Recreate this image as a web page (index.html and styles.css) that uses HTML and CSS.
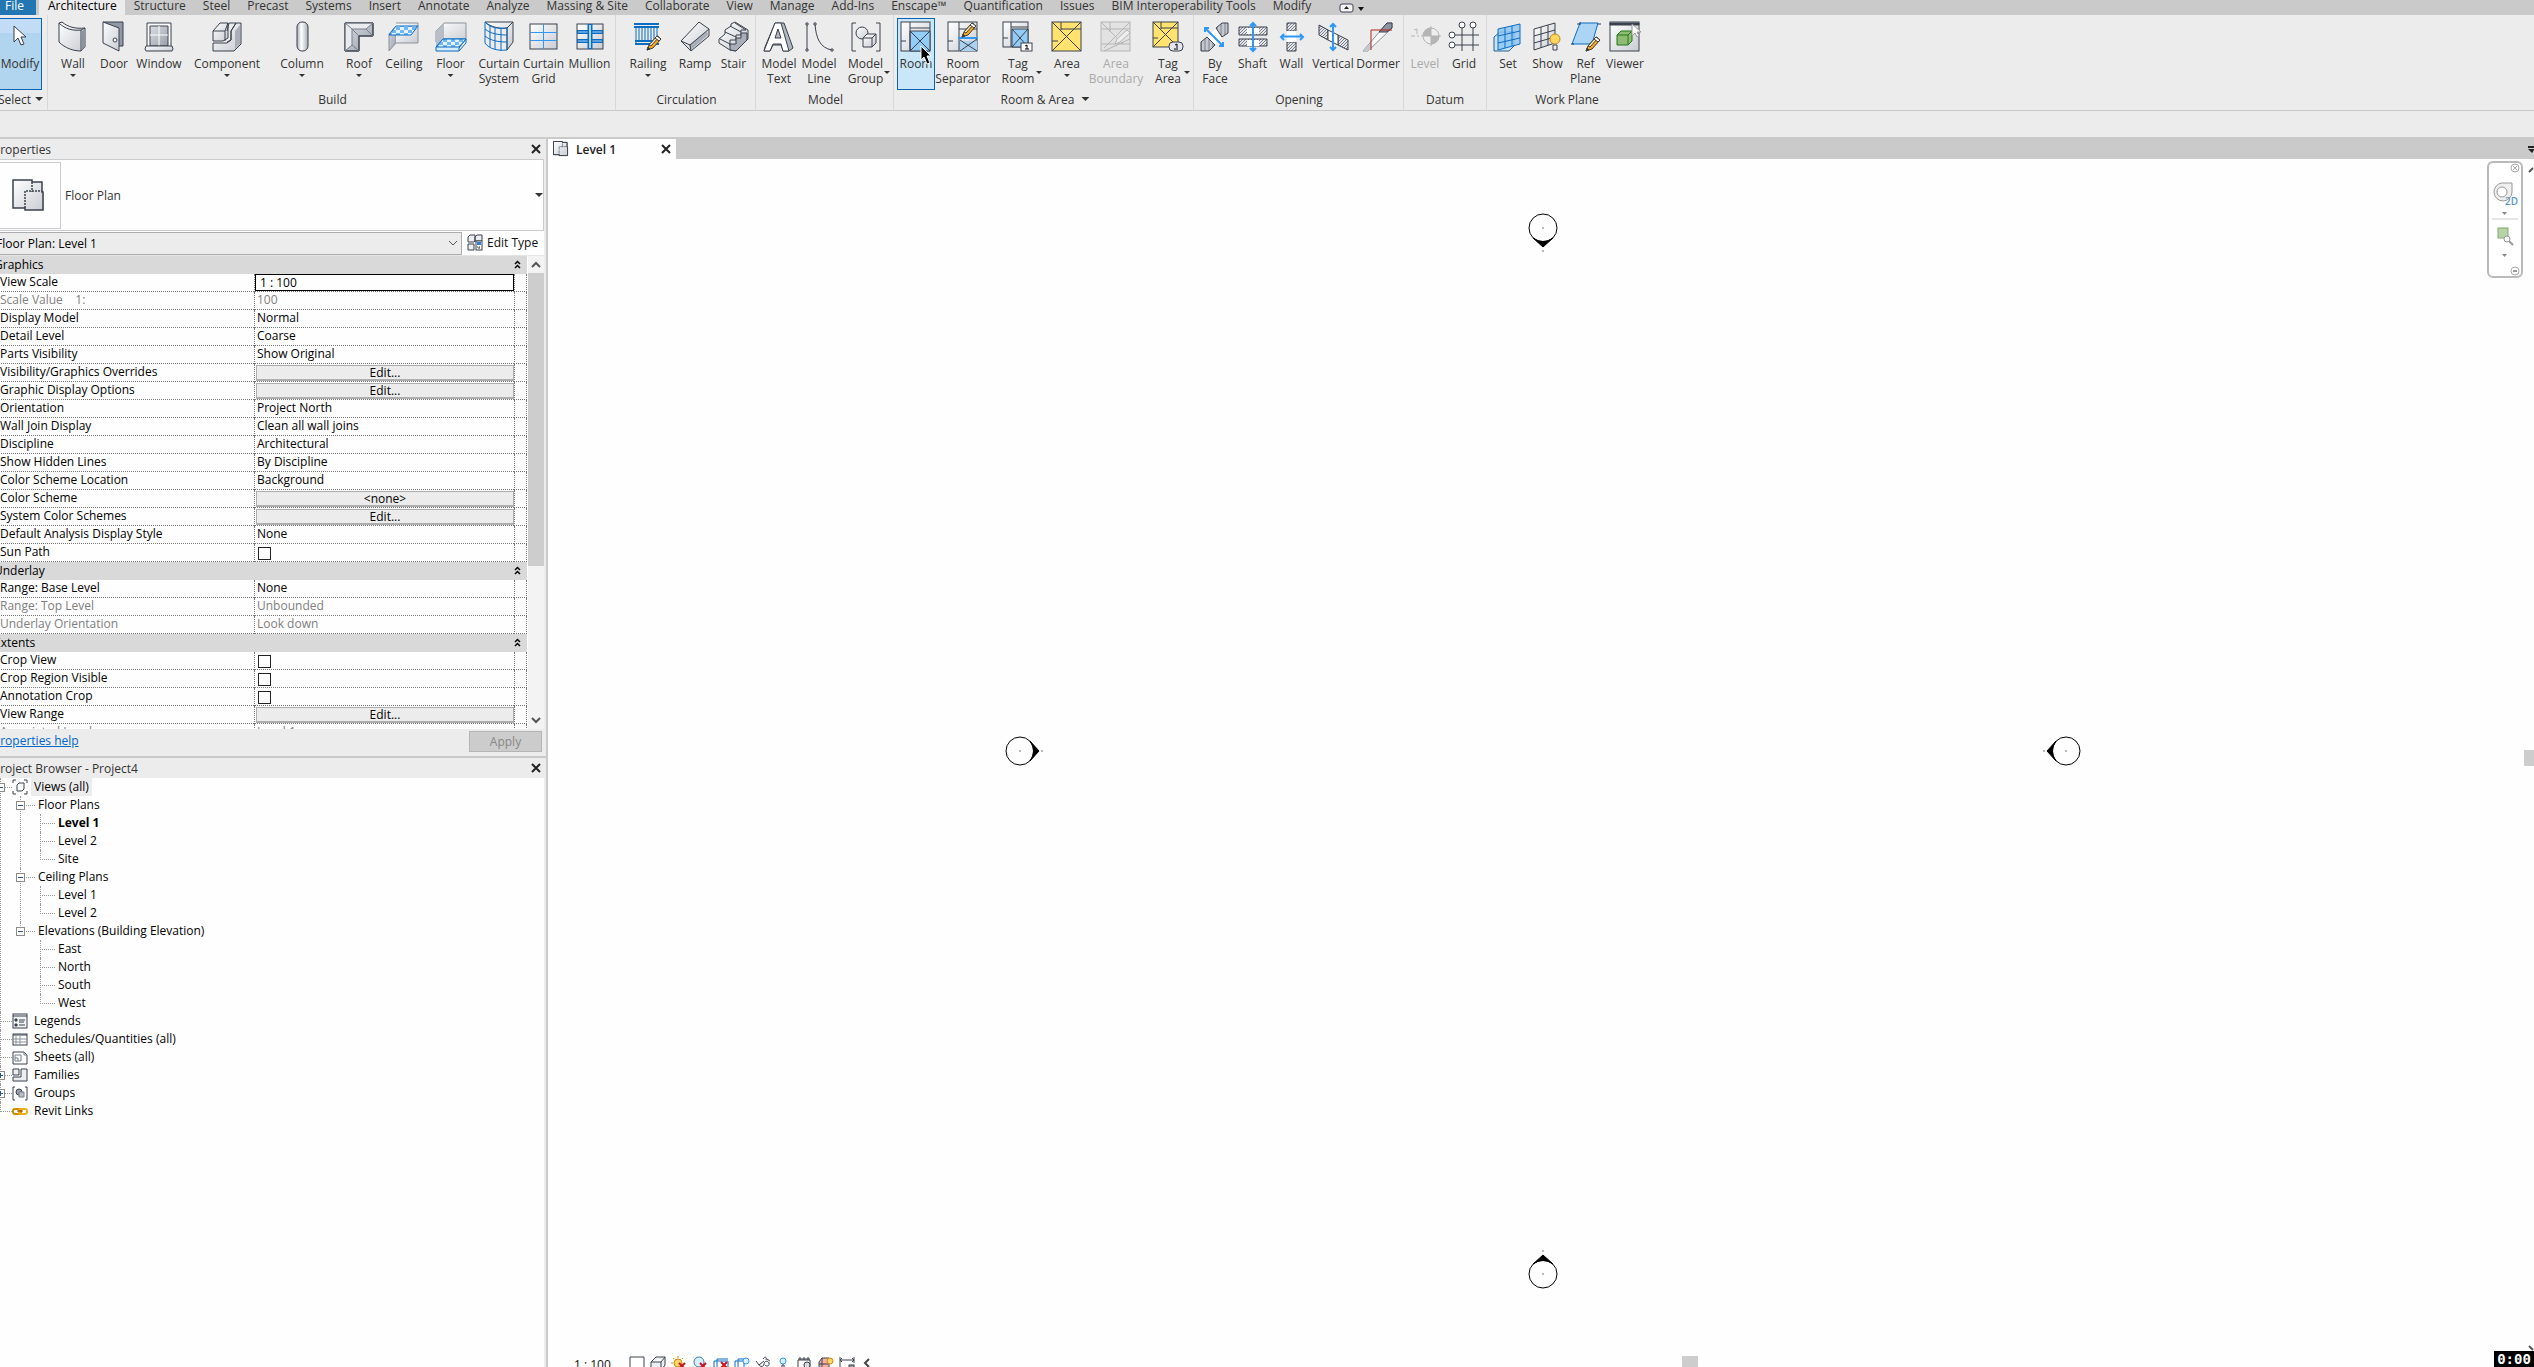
FILE: index.html
```html
<!DOCTYPE html>
<html lang="en">
<head>
<meta charset="utf-8">
<title>Project4 - Floor Plan: Level 1</title>
<link rel="stylesheet" href="styles.css">
</head>
<body>
<svg class="defs" aria-hidden="true">
  <defs>
    <linearGradient id="g" x1="0" y1="0" x2="1" y2="1"><stop offset="0" stop-color="#fff"/><stop offset="1" stop-color="#c9ccd3"/></linearGradient>
    <linearGradient id="gd" x1="0" y1="0" x2="1" y2="1"><stop offset="0" stop-color="#dcdfe4"/><stop offset="1" stop-color="#979da9"/></linearGradient>
    <linearGradient id="gc" x1="0" y1="0" x2="1" y2="0"><stop offset="0" stop-color="#a9adb6"/><stop offset=".4" stop-color="#fff"/><stop offset="1" stop-color="#a9adb6"/></linearGradient>
    <pattern id="hatch" width="3" height="3" patternUnits="userSpaceOnUse"><rect width="3" height="3" fill="#e4e6ea"/><path d="M0 3L3 0" stroke="#7b818c" stroke-width="1"/></pattern>
    <pattern id="bars" width="4" height="4" patternUnits="userSpaceOnUse"><rect width="4" height="4" fill="#c5c8cf"/><path d="M2 0v4" stroke="#7b818c" stroke-width="1"/></pattern>
    <pattern id="check" width="8" height="6" patternUnits="userSpaceOnUse"><rect width="8" height="6" fill="#e3f2fd"/><path d="M0 0h4v3h-4zM4 3h4v3h-4z" fill="#6db8f5"/></pattern>
    <symbol id="pencil" viewBox="0 0 16 16"><path d="M1 15l2-5 8-9 4 3-8 9z" fill="#f6a821" stroke="#4a3a2a"/><path d="M3 10l8-9 2 1-8 9z" fill="#ffe9a8"/><path d="M11 1l4 3-2 2-4-3z" fill="#fff" stroke="#4a3a2a"/><path d="M1 15l1-3 2 2z" fill="#333"/></symbol>
    <symbol id="close" viewBox="0 0 10 10"><path d="M1 1l8 8M9 1l-8 8" stroke="#222" stroke-width="2" fill="none"/></symbol>
    <symbol id="up2" viewBox="0 0 7 9"><path d="M1 4l2.500-2.500L6 4M1 8l2.500-2.500L6 8" stroke="#000" stroke-width="1.500" fill="none"/></symbol>
    <symbol id="plan" viewBox="0 0 32 32"><path d="M1 1h19v2h10v10h2v18h-19v-2h-12z" fill="url(#g)"/><path d="M20 3v-2h-19v28h12v2h18v-18h-1v-10h-10" fill="none" stroke="#3a414c" stroke-width="1.500"/><path d="M20 3v10M13 29v-17h17" fill="none" stroke="#3a414c" stroke-width="1.500" stroke-dasharray="2 1"/></symbol>
  </defs>
</svg>

<div class="app">
<nav class="tabs" aria-label="Ribbon tabs">
  <button class="file">File</button>
  <button class="tab active">Architecture</button>
  <button class="tab">Structure</button>
  <button class="tab">Steel</button>
  <button class="tab">Precast</button>
  <button class="tab">Systems</button>
  <button class="tab">Insert</button>
  <button class="tab">Annotate</button>
  <button class="tab">Analyze</button>
  <button class="tab">Massing &amp; Site</button>
  <button class="tab">Collaborate</button>
  <button class="tab">View</button>
  <button class="tab">Manage</button>
  <button class="tab">Add-Ins</button>
  <button class="tab">Enscape™</button>
  <button class="tab">Quantification</button>
  <button class="tab">Issues</button>
  <button class="tab">BIM Interoperability Tools</button>
  <button class="tab">Modify</button>
  <button class="fold" aria-label="Minimize ribbon"><svg width="26" height="10"><rect x="1" y="1" width="13" height="8" rx="2" fill="#f4f4f4" stroke="#3a414c"/><path d="M5 6l2.500-3L10 6z" fill="#222"/><path d="M19 4h6l-3 4z" fill="#111"/></svg></button>
</nav>

<header class="ribbon">
  <section class="panel select">
    <div class="tools">
      <button class="tool picked"><svg class="ic"><path d="M10 5v16l4-4 3 7 3-1-3-7h5z" fill="#fff"/></svg><span>Modify</span></button>
    </div>
    <h2>Select <i class="caret big"></i></h2>
  </section>

  <section class="panel build">
    <div class="tools">
      <button class="tool"><svg class="ic"><path d="M2 2l3-1c6 5 13 7 23 6v19l-4 4c-8 0-16-3-22-9z" fill="url(#g)"/><path d="M2 2c6 6 14 8 22 7v21M24 9l4-2"/><path d="M25 10l3-2v18l-3 3z" fill="#8d93a0" stroke="none"/></svg><span>Wall</span><i class="caret"></i></button>
      <button class="tool"><svg class="ic"><path d="M5 1h20v24h-4" fill="#9299a6"/><path d="M5 1l16 6v23l-16-8z" fill="url(#g)"/><circle cx="17" cy="19" r="2" fill="#fff"/></svg><span>Door</span></button>
      <button class="tool"><svg class="ic"><path d="M4 2h24v24h-24z" fill="#fff"/><path d="M7 5h18v20h-18z" fill="url(#gd)"/><path d="M16 5v20M7 14h18" stroke="#fff"/><path d="M3 25h26l1 3-1 2h-26l-1-2z" fill="url(#g)"/></svg><span>Window</span></button>
      <button class="tool"><svg class="ic"><path d="M2 10l7-8h8v15l-5 3h-10z" fill="url(#g)"/><path d="M20 10l5-8h5v21l-7 7h-21v-8h14l4-3z" fill="url(#g)"/><path d="M2 10h12l3-8M14 10v10M16 21l4-2v-9l5-8h-7l-2 8" /><path d="M24 10l5-6v19l-5 5z" fill="#a9aeb9" stroke="none"/></svg><span>Component</span><i class="caret"></i></button>
      <button class="tool"><svg class="ic"><rect x="11" y="1" width="11" height="29" rx="5" fill="url(#gc)"/></svg><span>Column</span><i class="caret"></i></button>
      <button class="tool"><svg class="ic"><path d="M2 2h28v13h-14v15h-14z" fill="url(#gd)"/><path d="M2 2h28l-7 6h-14v16l-7 6z" fill="#e9ebef" stroke="none"/><path d="M2 2h28v13h-14v15h-14z"/><path d="M2 2l7 6h14l7 7M9 8v16l7 6M9 8l7 7M23 8l7-6M9 24l-7 6" stroke="#777e8a"/></svg><span>Roof</span><i class="caret"></i></button>
      <button class="tool"><svg class="ic"><path d="M1 13v17l7-8v-17z" fill="url(#gd)" stroke="#8c919b"/><path d="M8 2h22v20h-22" stroke="#8c919b" fill="url(#g)"/><path d="M8 5h22l-7 9h-22z" fill="url(#check)" stroke="#0b6cc4"/></svg><span>Ceiling</span></button>
      <button class="tool"><svg class="ic"><path d="M1 21v-11l8-8h22v17" fill="url(#g)" stroke="#8c919b"/><path d="M1 10l8-8v17l-8 7z" fill="#b9bdc6" stroke="none"/><path d="M1 26l7-8h23l-7 9v3h-23z" fill="#d7ecfd" stroke="#0b6cc4"/><path d="M1 26l7-8h23l-7 8z" fill="url(#check)" stroke="#0b6cc4"/><path d="M24 30l7-8v-4" stroke="#0b6cc4"/></svg><span>Floor</span><i class="caret"></i></button>
      <button class="tool"><svg class="ic"><path d="M2 1h28v20l-6 8v-22c-8 1-16-1-22-6" fill="url(#g)"/><path d="M24 7l6-6"/><path d="M2 1c5 6 14 7 22 6v22c-9 1-18-1-22-7zM7 4v22M12 6v22M18 7v23M2 8c6 5 14 6 22 6M2 15c6 5 14 6 22 6" stroke="#0b6cc4"/></svg><span>Curtain<br>System</span></button>
      <button class="tool"><svg class="ic"><rect x="2" y="3" width="27" height="25" fill="url(#g)"/><path d="M15.500 3v25M2 11.500h27M2 19.500h27" stroke="#2f97f5"/></svg><span>Curtain<br>Grid</span></button>
      <button class="tool"><svg class="ic"><rect x="3" y="3" width="26" height="25" fill="url(#g)"/><path d="M3 11h26M3 20h26" stroke="#0b6cc4" stroke-width="4"/><path d="M4 11h24M4 20h24" stroke="#a8d6f9"/><path d="M16 3v25" stroke="#0b6cc4" stroke-width="5"/><path d="M16 4v23" stroke="#a8d6f9" stroke-width="2"/></svg><span>Mullion</span></button>
    </div>
    <h2>Build</h2>
  </section>

  <section class="panel circulation">
    <div class="tools">
      <button class="tool"><svg class="ic"><path d="M2 3h25M2 6h25M3 20h24M3 23h24" stroke="#0b6cc4" stroke-width="2"/><path d="M4 6v17M7 6v14M10 6v14M13 6v14M16 6v14M19 6v14M22 6v14M25 6v17" stroke="#0b6cc4"/><use href="#pencil" x="14" y="14" width="16" height="16"/></svg><span>Railing</span><i class="caret"></i></button>
      <button class="tool"><svg class="ic"><path d="M2 20l18-19 10 7v7l-18 15z" fill="url(#g)"/><path d="M12 29l-2-5 18-14 1 4z" fill="#a9aeb9" stroke="none"/><path d="M2 20l9 4 19-16M11 24l1 6"/></svg><span>Ramp</span></button>
      <button class="tool"><svg class="ic"><path d="M1 18l6-5v-4l6-4v-2l4-2 13 8v9l-12 12-6-1-11-7z" fill="url(#g)"/><path d="M17 2l11 7h-5v5h-5v5h-6v6M12 5l11 6M7 11l11 5M2 18l10 5"/><path d="M12 29v-6h6v-6h5v-5h6v7l-11 11z" fill="#a9aeb9" stroke-width="1"/></svg><span>Stair</span></button>
    </div>
    <h2>Circulation</h2>
  </section>

  <section class="panel model">
    <div class="tools">
      <button class="tool"><svg class="ic"><path d="M12 2h9l9 25-4 3h-6l-2-6h-8l-3 6h-6l1-4z" fill="#b1b6c0"/><path d="M12 2h6l8 28h-6l-2-7h-8l-3 7h-6z" fill="#fff"/><path d="M15 8l3 9h-6z" fill="#b1b6c0"/></svg><span>Model<br>Text</span></button>
      <button class="tool"><svg class="ic"><path d="M4 3v26M12 3c1 14 5 24 17 26" /><g fill="#fff"><path d="M3 2h2v2h-2zM3 28h2v2h-2zM11 2h2v2h-2zM28 28h2v2h-2z"/></g></svg><span>Model<br>Line</span></button>
      <button class="tool"><svg class="ic"><path d="M6 2h-4v28h4M26 2h4v28h-4"/><circle cx="12" cy="12" r="6" fill="url(#g)"/><path d="M13 17l4-4h9v9l-4 4h-9z" fill="url(#g)"/><path d="M13 17h9v9M22 17l4-4"/></svg><span>Model<br>Group</span><i class="caret side"></i></button>
    </div>
    <h2>Model</h2>
  </section>

  <section class="panel room">
    <div class="tools">
      <button class="tool hover"><svg class="ic"><rect x="1" y="1" width="29" height="29" fill="url(#g)"/><path d="M10 10h20v20h-20z" fill="#92ccf7"/><path d="M10 1v29M10 7h20M10 10l20 20M30 10l-20 20M1 20h5"/></svg><span>Room</span><svg class="pointer" width="12" height="20"><path d="M1 1v14l3-3 3 7 3-1-3-7h4z" fill="#000" stroke="#fff"/></svg></button>
      <button class="tool"><svg class="ic"><rect x="1" y="1" width="29" height="29" fill="url(#g)"/><path d="M12 20h18v10h-18z" fill="#a9d1f0" stroke="none"/><path d="M12 1v29M12 8h18M13 19l17 11M30 18l-17 12M1 20h5"/><path d="M11 17h20" stroke="#2f97f5" stroke-width="2"/><use href="#pencil" x="14" y="1" width="16" height="16"/></svg><span>Room<br>Separator</span></button>
      <button class="tool"><svg class="ic"><rect x="1" y="1" width="25" height="25" fill="url(#g)"/><path d="M10 8h16v18h-16z" fill="#92ccf7"/><path d="M9 1v25M9 6h17M10 8l16 18M26 8l-16 18M1 17h5"/><rect x="19" y="22" width="11" height="8" fill="#fff"/><path d="M23 25l2-1v4M23 28h4" stroke="#000"/></svg><span>Tag<br>Room</span><i class="caret side"></i></button>
      <button class="tool"><svg class="ic"><rect x="1" y="1" width="29" height="29" fill="#ffe36e"/><path d="M10 1v8M10 8h20M1 20h6M1 1l29 29M30 1l-29 29"/></svg><span>Area</span><i class="caret"></i></button>
      <button class="tool" disabled><svg class="ic"><g stroke="#b5b5b5"><rect x="1" y="1" width="29" height="29" fill="#e2e2e2"/><path d="M10 1v10M1 8h29M1 23h29M1 1l22 22M30 1l-26 26M4 30l26-12"/><path d="M15 23l2-5 10-9 3 3-10 9z" fill="#eee"/></g></svg><span>Area<br>Boundary</span></button>
      <button class="tool"><svg class="ic"><rect x="1" y="1" width="25" height="25" fill="#ffe36e"/><path d="M9 1v7M9 7h17M1 17h5M1 1l25 25M26 1l-25 25"/><rect x="17" y="21" width="14" height="9" rx="4" fill="#e3e5f0"/><path d="M23 24l2-1v4M22 28h4" stroke="#000"/></svg><span>Tag<br>Area</span><i class="caret side"></i></button>
    </div>
    <h2>Room &amp; Area <i class="caret big"></i></h2>
  </section>

  <section class="panel opening">
    <div class="tools">
      <button class="tool"><svg class="ic"><path d="M8 17l10-11 6 9-9 9z" fill="#fff" stroke="none"/><path d="M2 30v-9l6-5 8 8-6 6zM17 7l6-5h6v10l-6 4z" fill="url(#bars)"/><path d="M6 7l18 18M6 11v-4h4M20 25h4v-4" stroke="#2f97f5" stroke-width="2"/></svg><span>By<br>Face</span></button>
      <button class="tool"><svg class="ic"><path d="M2 6h28v8h-28zM2 18h28v7h-28z" fill="url(#hatch)" stroke-width="1"/><path d="M10 7h12v6h-12zM10 19h12v6h-12z" fill="#fff" stroke="none"/><path d="M16 2v28M13 5l3-3 3 3M13 27l3 3 3-3" stroke="#2f97f5" stroke-width="2"/></svg><span>Shaft</span></button>
      <button class="tool"><svg class="ic"><path d="M11 2h9v8h-9zM11 21h9v9h-9z" fill="url(#hatch)"/><path d="M11 10h9v11h-9z" fill="#fff" stroke="none"/><path d="M5 15.500h22M8 13l-3 3 3 3M24 13l3 3-3 3" stroke="#2f97f5" stroke-width="2"/></svg><span>Wall</span></button>
      <button class="tool"><svg class="ic"><path d="M2 4l9 5v10l-9-5zM21 14l10 5v10l-10-5z" fill="url(#hatch)"/><path d="M11 9l10 5v10l-10-5z" fill="#fff"/><path d="M16 3v26M13 6l3-3 3 3M13 26l3 3 3-3" stroke="#2f97f5" stroke-width="2"/></svg><span>Vertical</span></button>
      <button class="tool"><svg class="ic"><path d="M1 30l24-28h5v5l-24 23z" fill="#f8f8f8" stroke="#8c919b"/><path d="M17 11l8-9h5v5l-5 4z" fill="#8d93a0"/><path d="M1 30l8-9v7l-3 2z" fill="#c5c8cf" stroke="none"/><path d="M9 29v-20h21" stroke="#b3261a"/></svg><span>Dormer</span></button>
    </div>
    <h2>Opening</h2>
  </section>

  <section class="panel datum">
    <div class="tools">
      <button class="tool" disabled><svg class="ic"><g stroke="#b5b5b5"><path d="M2 15h4M8 15h2M5 9l3-1v5M12 15h20M22 5v20"/><circle cx="22" cy="15" r="8" fill="#eee"/><path d="M22 7a8 8 0 0 0-8 8h8zM22 23a8 8 0 0 0 8-8h-8z" fill="#b5b5b5"/></g></svg><span>Level</span></button>
      <button class="tool"><svg class="ic"><path d="M7 14h24M7 24h24M14 7v23M25 7v23"/><g fill="#fff"><circle cx="4" cy="14" r="3"/><circle cx="4" cy="24" r="3"/><circle cx="14" cy="4" r="3"/><circle cx="25" cy="4" r="3"/></g></svg><span>Grid</span></button>
    </div>
    <h2>Datum</h2>
  </section>

  <section class="panel work">
    <div class="tools">
      <button class="tool"><svg class="ic"><path d="M2 16l6-5h14v14l-5 5h-15z" fill="#c5e3fa" stroke="#2a5e93"/><path d="M6 8l22-5v20l-22 6z" fill="#8cc6f3" fill-opacity=".8" stroke="#0b6cc4"/><path d="M13 7v20M20 5v20M6 15l22-5M6 22l22-5" stroke="#0b6cc4"/></svg><span>Set</span></button>
      <button class="tool"><svg class="ic"><path d="M2 8l21-6v20l-21 7z" fill="url(#g)"/><path d="M9 6v21M16 4v20M2 15l21-6M2 22l21-6"/><circle cx="23" cy="18" r="5" fill="#ffd75e" stroke="#c08a1e"/><path d="M21 24h4v5h-4z" fill="#eee"/></svg><span>Show</span></button>
      <button class="tool"><svg class="ic"><path d="M10 2h18l-6 21h-20z" fill="#acd4f4" stroke="#0b6cc4"/><path d="M7 3h3M10 1v3M28 3h3M1 23h3" stroke="#2a3f66"/><use href="#pencil" x="15" y="15" width="16" height="16"/></svg><span>Ref<br>Plane</span></button>
      <button class="tool"><svg class="ic"><rect x="1" y="1" width="29" height="29" fill="url(#g)"/><path d="M1 2h29v2h-29z" fill="#3a414c"/><path d="M8 14l4-4h11v10l-4 4h-11z" fill="#8fbb74" stroke="#1c7a12"/><path d="M8 14h11v10M19 14l4-4" stroke="#1c7a12"/><path d="M23 3v12l3-3 2 4 2-1-2-4h4z" fill="#fff" stroke="#999"/></svg><span>Viewer</span></button>
    </div>
    <h2>Work Plane</h2>
  </section>
</header>
<div class="options"></div>

<div class="body">
<aside class="dock">
  <section class="properties">
    <div class="title"><h3>Properties</h3><button class="x" aria-label="Close Properties"><svg width="10" height="10"><use href="#close"/></svg></button></div>
    <div class="type">
      <div class="thumb"><svg width="32" height="32"><use href="#plan"/></svg></div>
      <span>Floor Plan</span><i class="caret big"></i>
    </div>
    <div class="instance">
      <div class="combo"><select aria-label="Instance filter"><option>Floor Plan: Level 1</option></select><svg width="10" height="7"><path d="M1 1l4 4 4-4" fill="none" stroke="#555"/></svg></div>
      <button class="edit-type"><svg width="16" height="17"><g fill="#eceef2" stroke="#3a414c"><path d="M1 3l2-2h5v6l-1 1h-6zM8 3l2-2h5v6h-7zM1 10h6v6h-6z"/><rect x="9" y="7" width="6" height="9" fill="#fff"/></g><path d="M10 8h4v3h-4z" fill="#2f7fd6"/><path d="M10 13h1M12 13h1M11 14h2" stroke="#333"/></svg>Edit Type</button>
    </div>
    <div class="grid">
      <table>
        <colgroup><col class="c-name"><col class="c-value"><col class="c-link"></colgroup>
        <tbody>
        <tr class="group"><th colspan="2">Graphics</th><td><svg width="7" height="9"><use href="#up2"/></svg></td></tr>
        <tr><th>View Scale</th><td><select class="scale" aria-label="View Scale"><option>1 : 100</option></select></td><td></td></tr>
        <tr class="off"><th>Scale Value &nbsp;&nbsp; 1:</th><td>100</td><td></td></tr>
        <tr><th>Display Model</th><td>Normal</td><td></td></tr>
        <tr><th>Detail Level</th><td>Coarse</td><td></td></tr>
        <tr><th>Parts Visibility</th><td>Show Original</td><td></td></tr>
        <tr><th>Visibility/Graphics Overrides</th><td><button class="edit">Edit...</button></td><td></td></tr>
        <tr><th>Graphic Display Options</th><td><button class="edit">Edit...</button></td><td></td></tr>
        <tr><th>Orientation</th><td>Project North</td><td></td></tr>
        <tr><th>Wall Join Display</th><td>Clean all wall joins</td><td></td></tr>
        <tr><th>Discipline</th><td>Architectural</td><td></td></tr>
        <tr><th>Show Hidden Lines</th><td>By Discipline</td><td></td></tr>
        <tr><th>Color Scheme Location</th><td>Background</td><td></td></tr>
        <tr><th>Color Scheme</th><td><button class="edit">&lt;none&gt;</button></td><td></td></tr>
        <tr><th>System Color Schemes</th><td><button class="edit">Edit...</button></td><td></td></tr>
        <tr><th>Default Analysis Display Style</th><td>None</td><td></td></tr>
        <tr><th><label for="sun">Sun Path</label></th><td><input type="checkbox" id="sun"></td><td></td></tr>
        <tr class="group"><th colspan="2">Underlay</th><td><svg width="7" height="9"><use href="#up2"/></svg></td></tr>
        <tr><th>Range: Base Level</th><td>None</td><td></td></tr>
        <tr class="off"><th>Range: Top Level</th><td>Unbounded</td><td></td></tr>
        <tr class="off"><th>Underlay Orientation</th><td>Look down</td><td></td></tr>
        <tr class="group"><th colspan="2">Extents</th><td><svg width="7" height="9"><use href="#up2"/></svg></td></tr>
        <tr><th><label for="crop">Crop View</label></th><td><input type="checkbox" id="crop"></td><td></td></tr>
        <tr><th><label for="region">Crop Region Visible</label></th><td><input type="checkbox" id="region"></td><td></td></tr>
        <tr><th><label for="anno">Annotation Crop</label></th><td><input type="checkbox" id="anno"></td><td></td></tr>
        <tr><th>View Range</th><td><button class="edit">Edit...</button></td><td></td></tr>
        <tr class="off"><th>Associated Level</th><td>Level 1</td><td></td></tr>
        </tbody>
      </table>
      <div class="scroll">
        <svg width="15" height="17"><path d="M4 11l4-4 4 4" fill="none" stroke="#555" stroke-width="2"/></svg>
        <div class="thumb-bar"></div>
        <svg width="15" height="17"><path d="M4 6l4 4 4-4" fill="none" stroke="#555" stroke-width="2"/></svg>
      </div>
    </div>
    <div class="foot"><a href="#help">Properties help</a><button disabled>Apply</button></div>
  </section>

  <section class="browser">
    <div class="title"><h3>Project Browser - Project4</h3><button class="x" aria-label="Close Project Browser"><svg width="10" height="10"><use href="#close"/></svg></button></div>
    <div class="tree-box">
    <ul class="tree">
      <li><div class="row"><button class="exp" aria-label="Collapse Views"></button><svg class="ti"><path d="M4 1h-3v3M12 1h3v3M4 15h-3v-3M12 15h3v-3M5 6l2-2h5v6l-2 2h-5z"/></svg><span class="sel">Views (all)</span></div>
        <ul>
          <li><div class="row"><button class="exp" aria-label="Collapse Floor Plans"></button><span>Floor Plans</span></div>
            <ul><li><div class="row"><span class="bold">Level 1</span></div></li><li><div class="row"><span>Level 2</span></div></li><li><div class="row"><span>Site</span></div></li></ul></li>
          <li><div class="row"><button class="exp" aria-label="Collapse Ceiling Plans"></button><span>Ceiling Plans</span></div>
            <ul><li><div class="row"><span>Level 1</span></div></li><li><div class="row"><span>Level 2</span></div></li></ul></li>
          <li><div class="row"><button class="exp" aria-label="Collapse Elevations"></button><span>Elevations (Building Elevation)</span></div>
            <ul><li><div class="row"><span>East</span></div></li><li><div class="row"><span>North</span></div></li><li><div class="row"><span>South</span></div></li><li><div class="row"><span>West</span></div></li></ul></li>
        </ul></li>
      <li><div class="row"><svg class="ti"><rect x="1" y="1" width="14" height="14" fill="#f2f3f5"/><path d="M1 3h14M7 7h6M7 9h5M7 12h6"/><path d="M3 6h2v2h-2zM3 11h2v2h-2z" fill="#3a414c"/></svg><span>Legends</span></div></li>
      <li><div class="row"><svg class="ti"><rect x="1" y="3" width="14" height="11" fill="#fff"/><path d="M1 4h14"/><path d="M4 5v9M8 5v9M1 8h14M1 11h14" stroke="#8c919b"/></svg><span>Schedules/Quantities (all)</span></div></li>
      <li><div class="row"><svg class="ti"><path d="M1 3h11l3 3v9h-14z" fill="#fff"/><path d="M12 3v3h3M3 6h6v6h-6zM3 9h3v3" stroke="#777e8a"/></svg><span>Sheets (all)</span></div></li>
      <li><div class="row"><button class="exp plus" aria-label="Expand Families"></button><svg class="ti"><path d="M1 2h6v6h-6zM9 2h6v12h-14v-4h8z" fill="#eceef2"/></svg><span>Families</span></div></li>
      <li><div class="row"><button class="exp plus" aria-label="Expand Groups"></button><svg class="ti"><path d="M3 2h-2v13h2M13 2h2v13h-2"/><circle cx="7" cy="7" r="3" fill="#9aa0ab"/><path d="M7 7h5v5h-5z" fill="#b9bdc6" stroke="#777e8a"/></svg><span>Groups</span></div></li>
      <li><div class="row"><svg class="ti"><rect x="1" y="6" width="8" height="5" rx="2" stroke="#d08a00" stroke-width="2"/><rect x="7" y="6" width="8" height="5" rx="2" stroke="#f0ae1a" stroke-width="2"/><path d="M5 8h6" stroke="#8a4b00"/></svg><span>Revit Links</span></div></li>
    </ul>
    </div>
  </section>
</aside>

<main class="workspace">
  <div class="doc-tabs">
    <div class="doc"><svg width="16" height="16" viewBox="0 0 34 34"><use href="#plan" width="32" height="32"/><path d="M20 2v-1h-19v28h12v2h18v-18h-1v-10h-10" fill="none" stroke="#3a414c" stroke-width="2"/></svg><span>Level 1</span><button class="x" aria-label="Close view"><svg width="10" height="10"><use href="#close"/></svg></button></div>
    <svg class="more" width="6" height="9"><path d="M0 1h6v2h-6zM0 4h6v1l-2 3-4-4z" fill="#222"/></svg>
  </div>
  <div class="canvas">
    <svg class="mark north" viewBox="0 0 40 40"><circle cx="20" cy="16" r="14"/><path class="tip" d="M10 26l10 9 10-9q-10 7-20 0z"/><path class="dot" d="M19 16h2M19 39h2"/></svg>
    <svg class="mark west" viewBox="0 0 40 40"><circle cx="16" cy="20" r="14"/><path class="tip" d="M26 10l9 10-9 10q7-10 0-20z"/><path class="dot" d="M15 20h2M37 20h2"/></svg>
    <svg class="mark east" viewBox="0 0 40 40"><circle cx="24" cy="20" r="14"/><path class="tip" d="M14 10l-9 10 9 10q-7-10 0-20z"/><path class="dot" d="M23 20h2M1 20h2"/></svg>
    <svg class="mark south" viewBox="0 0 40 40"><circle cx="20" cy="24" r="14"/><path class="tip" d="M10 14l10-9 10 9q-10-7-20 0z"/><path class="dot" d="M19 24h2M19 1h2"/></svg>
    <svg class="navbar" width="36" height="118"><rect x="1" y="1" width="34" height="115" rx="5" fill="#fff" stroke="#b9b9b9" stroke-width="2"/><circle cx="28" cy="7" r="4" fill="#fff" stroke="#aaa"/><path d="M26 5l4 4M30 5l-4 4" stroke="#aaa"/><path d="M15 22h10v9a9 9 0 1 1-10-9z" fill="#eee" stroke="#999"/><circle cx="15" cy="31" r="5" fill="#fff" stroke="#999"/><text x="18" y="44" class="two-d">2D</text><path d="M15 51h5l-2.500 3z" fill="#888"/><path d="M5 58h26" stroke="#ccc"/><rect x="11" y="67" width="10" height="10" fill="#b9d3a8" stroke="#7fa96a"/><circle cx="20" cy="78" r="3" fill="#fff" stroke="#999"/><path d="M22 80l4 4" stroke="#999" stroke-width="2"/><path d="M15 93h5l-2.500 3z" fill="#888"/><circle cx="28" cy="110" r="4" fill="#fff" stroke="#aaa"/><path d="M26 110h4" stroke="#999" stroke-width="2"/></svg>
    <svg class="edge top" width="6" height="6"><path d="M1 5l4-4" stroke="#555" stroke-width="2"/></svg>
    <svg class="edge bottom" width="6" height="6"><path d="M1 1l4 4" stroke="#555" stroke-width="2"/></svg>
    <div class="v-thumb"></div>
  </div>
  <footer class="viewbar">
    <button class="ratio">1 : 100</button>
    <svg class="vi"><path d="M1 1h14v15h-14z" fill="#fff"/></svg>
    <svg class="vi"><path d="M1 6l5-5h9v8l-4 6h-10zM1 6h10l4-5M11 6v9" fill="#eceef2"/></svg>
    <svg class="vi"><circle cx="7" cy="7" r="4" fill="#ffd66b" stroke="#d98a00"/><path d="M7 0v2M0 7h2M2 2l1 1M12 2l-1 1" stroke="#d98a00"/><path d="M8 7l6 6M14 7l-6 6" stroke="#c8141c" stroke-width="2"/></svg>
    <svg class="vi"><circle cx="7" cy="6" r="5" fill="#dceffc" stroke="#3a7fb5"/><path d="M8 7l6 6M14 7l-6 6" stroke="#c8141c" stroke-width="2"/></svg>
    <svg class="vi"><path d="M1 12v-7h3v-2h11M4 14v-9h11v8" stroke="#0b6cc4"/><path d="M8 6l6 6M14 6l-6 6" stroke="#c8141c" stroke-width="2"/></svg>
    <svg class="vi"><path d="M1 12v-7h3v-2h8M4 14v-9h6v8" stroke="#0b6cc4"/><circle cx="12" cy="5" r="3" fill="#dceffc" stroke="#2f97f5"/></svg>
    <svg class="vi"><path d="M1 5l3 4c1 2 5 2 5-1s4-4 5-1-3 4-4 2M8 3c2-3 4-2 3 1M12 3l3 2M4 9l5-4"/></svg>
    <svg class="vi"><circle cx="7" cy="5" r="3" fill="#dceffc" stroke="#2f97f5"/><path d="M6 9h2v4h-2z"/></svg>
    <svg class="vi"><path d="M1 4h12v10h-12zM1 3h12M3 1v3M7 1v3M11 1v3" /><circle cx="10" cy="9" r="3" fill="#ddd"/></svg>
    <svg class="vi"><path d="M1 6l3-4h7v9l-3 3h-7zM4 2v12M1 8h9" fill="#f3b3a8"/><circle cx="12" cy="5" r="3" fill="#ffd66b" stroke="#d98a00"/></svg>
    <svg class="vi"><path d="M1 1v12M15 1v6M1 4h14M3 2l-2 2 2 2M13 2l2 2-2 2"/><rect x="10" y="9" width="5" height="5" fill="#999"/></svg>
    <svg class="vi"><path d="M9 3l-4 4 4 4" stroke="#444" stroke-width="2"/></svg>
    <div class="h-thumb"></div>
    <time class="clock">0:00</time>
  </footer>
</main>
</div>
</div>
</body>
</html>
```
FILE: styles.css
```css
:root { --line: #cacaca; --face: #ececec; }
* { box-sizing: border-box; }
body { margin: 0; height: 100vh; overflow: hidden; background: #fefefe; color: #222; font: 12px/15px "Open Sans", "Noto Sans", sans-serif; }
button, select, input { margin: 0; padding: 0; border: 0; background: none; color: inherit; font: inherit; }
h2, h3, ul { margin: 0; padding: 0; font: inherit; list-style: none; }
svg { display: block; flex: none; }
.defs { position: absolute; width: 0; height: 0; }

/* The window hangs 8px over the left screen edge */
.app { display: flex; flex-direction: column; height: 100vh; margin-left: -8px; }

.tabs { display: flex; height: 15px; background: var(--line); color: #333; }
.tabs button { height: 15px; line-height: 11px; padding: 0 8px 4px 9px; white-space: nowrap; }
.tabs .file { width: 44px; margin-right: 3px; background: #2277b3; color: #fff; }
.tabs .active { background: var(--face); color: #000; }
.tabs .fold { padding: 0 20px; }

.ribbon { display: flex; height: 96px; background: var(--face); border-bottom: 1px solid var(--line); }
.panel { display: flex; flex-direction: column; padding-top: 3px; border-right: 1px solid #d8d8d8; }
.panel:last-child { border: 0; }
.panel h2 { display: flex; justify-content: center; align-items: center; gap: 7px; height: 18px; color: #333; }
.tools { display: grid; height: 72px; }
.tool { position: relative; display: flex; flex-direction: column; align-items: center; height: 72px; padding-top: 2px; border: 1px solid transparent; color: #333; white-space: nowrap; }
.tool > span { margin: 3px -8px 0; }
.tool:disabled { color: #aaa; }
.picked { background: linear-gradient(#c2dcf5 14px, #b1d4ef 0); border-color: #0b63b5; }
.hover { background: #c9e7f8; border-color: #0b63b5; }
.ic { width: 32px; height: 32px; fill: none; stroke: #3a414c; }
.pointer { position: absolute; left: 22px; top: 26px; }
.caret { width: 6px; height: 3px; margin-top: 3px; background: #333; clip-path: polygon(0 0, 100% 0, 50% 100%); }
.caret.big { width: 8px; height: 4px; margin-top: 0; }
.caret.side { position: absolute; right: 2px; top: 49px; }
.panel.select { width: 56px; padding-left: 6px; }
.select .tools { grid-template-columns: 44px; }
.select h2 { justify-content: flex-start; gap: 4px; }
.build { padding-left: 4px; padding-right: 2px; }
.build .tools { grid-template-columns: 42px 40px 50px 86px 64px 50px 40px 53px 44px 45px 47px; }
.circulation { padding-left: 8px; padding-right: 6px; }
.circulation .tools { grid-template-columns: 48px 46px 31px; }
.model { padding-left: 2px; }
.model .tools { grid-template-columns: 42px 38px 55px; }
.room { padding-left: 3px; }
.room .tools { grid-template-columns: 38px 56px 54px 44px 54px 50px; }
.opening { padding-left: 3px; padding-right: 2px; }
.opening .tools { grid-template-columns: 36px 39px 39px 44px 46px; }
.datum { padding: 3px 2px 0; }
.datum .tools { grid-template-columns: 38px 40px; }
.work { padding-left: 1px; }
.work .tools { grid-template-columns: 40px 39px 37px 42px; }
.options { height: 26px; background: var(--face); }

.body { display: flex; flex: 1; min-height: 0; }
.dock { display: flex; flex-direction: column; width: 556px; flex: none; background: var(--face); border-top: 2px solid var(--line); border-right: 2px solid var(--line); }
.title { display: flex; justify-content: space-between; align-items: center; height: 20px; padding: 0 5px 0 1px; color: #333; }
.type { display: flex; align-items: center; width: 552px; height: 72px; border: 1px solid #cbccd0; background: #fefefe; }
.type .thumb { display: grid; place-items: center; width: 68px; height: 67px; padding-left: 2px; border: 1px solid #cbccd0; }
.type > span { flex: 1; padding-left: 4px; color: #333; }
.instance { display: flex; width: 552px; height: 25px; padding-top: 1px; background: #fefefe; border-bottom: 1px solid #e4e4e4; }
.combo { display: flex; align-items: center; width: 470px; height: 23px; padding-right: 3px; border: 1px solid #adadad; background: var(--face); }
.combo select { flex: 1; height: 20px; padding-left: 3px; appearance: none; color: #000; }
.edit-type { display: flex; align-items: center; gap: 4px; height: 20px; padding-left: 5px; color: #111; white-space: nowrap; }
.grid { display: flex; width: 552px; height: 473px; background: #fefefe; overflow: hidden; color: #000; }
table { width: 535px; height: 0; flex: none; table-layout: fixed; border-spacing: 0; }
.c-name { width: 262px; }
.c-link { width: 13px; }
th, td { height: 18px; padding: 0 0 0 2px; border-bottom: 1px dotted #777; border-left: 1px dotted #777; text-align: left; font-weight: 400; line-height: 15px; white-space: nowrap; vertical-align: top; }
th { padding-left: 8px; border-left: 0; }
td:last-child { border-right: 1px dotted #777; }
.group th { padding-left: 2px; line-height: 18px; }
.group th, .group td, .group td:last-child { background: #d9d9d9; border: 0; }
.group td { padding: 4px 0 0; }
.off { color: #808080; }
.edit { display: block; width: 258px; height: 16px; margin: 1px 0 0 -1px; border: 1px solid #adadad; border-bottom-width: 2px; background: var(--face); line-height: 13px; text-align: center; }
.scale { display: block; width: 259px; height: 17px; margin-left: -2px; padding-left: 4px; border: 1px solid #000; appearance: none; line-height: 15px; }
input[type="checkbox"] { display: block; width: 13px; height: 13px; margin: 3px 0 0 1px; border: 1px solid #222; appearance: none; }
.scroll { display: flex; flex-direction: column; width: 16px; margin-left: 1px; background: #f3f3f3; }
.thumb-bar { height: 293px; margin-bottom: auto; background: #cdcdcd; }
.foot { display: flex; justify-content: space-between; align-items: flex-start; height: 27px; padding: 2px 4px 0 1px; }
.foot a { padding-top: 2px; color: #0066cc; text-decoration: underline; }
.foot button { width: 73px; height: 21px; border: 1px solid #b5b5b5; background: #cccccc; color: #888; }
.browser { display: flex; flex-direction: column; flex: 1; min-height: 0; border-top: 2px solid var(--line); }
.tree-box { flex: 1; width: 552px; padding-left: 8px; background: #fefefe; color: #000; overflow: hidden; }
.tree ul { margin-left: 20px; }
.tree li { position: relative; }
.tree li::before { content: ""; position: absolute; left: 0; top: 0; bottom: 0; border-left: 1px dotted #999; }
.tree li:last-child::before { bottom: auto; height: 10px; }
.row { position: relative; display: flex; align-items: center; height: 18px; }
.row::before { content: ""; flex: none; width: 15px; margin-top: 1px; border-top: 1px dotted #999; }
.tree > li > .row::before { width: 12px; }
.row > span { height: 18px; padding: 0 3px; line-height: 18px; }
.ti { width: 16px; height: 16px; margin-right: 3px; fill: none; stroke: #3a414c; }
.sel { background: var(--face); }
.bold { font-weight: 700; }
.exp { position: absolute; left: -4px; top: 5px; width: 9px; height: 9px; border: 1px solid #8c8c8c; background: linear-gradient(#2b5797, #2b5797) center / 5px 1px no-repeat #fefefe; }
.exp.plus { background: linear-gradient(#2b5797, #2b5797) center / 5px 1px no-repeat, linear-gradient(#2b5797, #2b5797) center / 1px 5px no-repeat #fefefe; }

.workspace { display: flex; flex-direction: column; flex: 1; min-width: 0; }
.doc-tabs { display: flex; justify-content: space-between; align-items: center; height: 22px; padding-top: 2px; background: var(--line); }
.doc { display: flex; align-items: center; width: 128px; height: 20px; padding: 0 5px; background: #fefefe; font-weight: 600; }
.doc span { flex: 1; padding-left: 7px; }
.canvas { position: relative; flex: 1; background: #fefefe; }
.mark { position: absolute; width: 40px; height: 40px; fill: none; stroke: #000; }
.mark .tip { fill: #000; }
.mark .dot { stroke: #777; }
.north { left: 975px; top: 53px; }
.west { left: 456px; top: 572px; }
.east { left: 1494px; top: 572px; }
.south { left: 975px; top: 1091px; }
.navbar { position: absolute; right: 11px; top: 2px; fill: none; }
.two-d { fill: #5b93c4; font-size: 10px; font-weight: 600; }
.edge { position: absolute; right: 0; }
.edge.top { top: 8px; }
.edge.bottom { bottom: 0; }
.v-thumb { position: absolute; right: 0; top: 591px; width: 10px; height: 16px; background: #cdcdcd; }
.viewbar { position: relative; display: flex; gap: 5px; height: 16px; padding-left: 26px; overflow: hidden; color: #111; }
.ratio { width: 50px; height: 15px; margin-top: 6px; text-align: left; }
.vi { width: 16px; height: 16px; margin-top: 5px; fill: none; stroke: #3a414c; }
.h-thumb { position: absolute; left: 1134px; bottom: 0; width: 16px; height: 11px; background: #cdcdcd; }
.clock { width: 40px; margin-left: auto; background: #000; color: #fff; font: 700 14px/16px "DejaVu Sans Mono", monospace; text-align: center; }
```
